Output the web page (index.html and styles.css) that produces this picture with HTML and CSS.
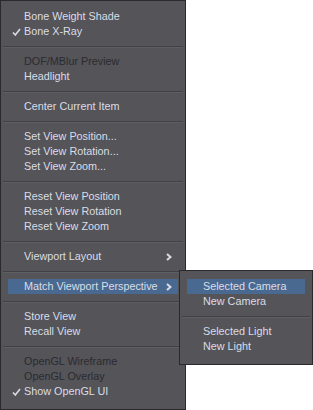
FILE: index.html
```html
<!DOCTYPE html>
<html>
<head>
    <title>Viewport Menu</title>
    <link rel="stylesheet" href="styles.css">
</head>
<body>
    <div class="menu">
        <div class="item"><span class="mark"></span><span class="label">Bone Weight Shade</span></div>
        <div class="item">
            <span class="mark"><svg width="9" height="8" viewBox="0 0 9 8"><path d="M1 4.5 L3.3 7 L8 1" fill="none" stroke="#d9dce4" stroke-width="1.6"/></svg></span>
            <span class="label">Bone X-Ray</span>
        </div>
        <div class="sep"></div>
        <div class="item dim"><span class="mark"></span><span class="label">DOF/MBlur Preview</span></div>
        <div class="item"><span class="mark"></span><span class="label">Headlight</span></div>
        <div class="sep"></div>
        <div class="item"><span class="mark"></span><span class="label">Center Current Item</span></div>
        <div class="sep"></div>
        <div class="item"><span class="mark"></span><span class="label">Set View Position...</span></div>
        <div class="item"><span class="mark"></span><span class="label">Set View Rotation...</span></div>
        <div class="item"><span class="mark"></span><span class="label">Set View Zoom...</span></div>
        <div class="sep"></div>
        <div class="item"><span class="mark"></span><span class="label">Reset View Position</span></div>
        <div class="item"><span class="mark"></span><span class="label">Reset View Rotation</span></div>
        <div class="item"><span class="mark"></span><span class="label">Reset View Zoom</span></div>
        <div class="sep"></div>
        <div class="item">
            <span class="mark"></span><span class="label">Viewport Layout</span>
            <svg class="arrow" width="6" height="8" viewBox="0 0 6 8"><path d="M1 1 L4.5 4 L1 7" fill="none" stroke="#d9dce4" stroke-width="2"/></svg>
        </div>
        <div class="sep"></div>
        <div class="item active">
            <span class="mark"></span><span class="label">Match Viewport Perspective</span>
            <svg class="arrow" width="6" height="8" viewBox="0 0 6 8"><path d="M1 1 L4.5 4 L1 7" fill="none" stroke="#d9dce4" stroke-width="2"/></svg>
        </div>
        <div class="sep"></div>
        <div class="item"><span class="mark"></span><span class="label">Store View</span></div>
        <div class="item"><span class="mark"></span><span class="label">Recall View</span></div>
        <div class="sep"></div>
        <div class="item dim"><span class="mark"></span><span class="label">OpenGL Wireframe</span></div>
        <div class="item dim"><span class="mark"></span><span class="label">OpenGL Overlay</span></div>
        <div class="item">
            <span class="mark"><svg width="9" height="8" viewBox="0 0 9 8"><path d="M1 4.5 L3.3 7 L8 1" fill="none" stroke="#d9dce4" stroke-width="1.6"/></svg></span>
            <span class="label">Show OpenGL UI</span>
        </div>
    </div>

    <!-- submenu for Match Viewport Perspective -->
    <div class="menu submenu">
        <div class="item active"><span class="mark"></span><span class="label">Selected Camera</span></div>
        <div class="item"><span class="mark"></span><span class="label">New Camera</span></div>
        <div class="sep"></div>
        <div class="item"><span class="mark"></span><span class="label">Selected Light</span></div>
        <div class="item"><span class="mark"></span><span class="label">New Light</span></div>
    </div>
</body>
</html>
```

FILE: styles.css
```css
body {
    margin: 0;
    padding: 0;
    background: #ffffff;
    font-family: 'Liberation Sans', Arial, sans-serif;
    font-size: 10.8px;
}

.menu {
    width: 184px;
    height: 400px;
    padding-top: 8px;
    background: #545459;
    border: 1px solid #2a2a2d;
    color: #dadde6;
}

.item {
    display: flex;
    align-items: center;
    height: 15px;
    line-height: 15px;
    margin: 0 7px;
    white-space: nowrap;
}

.mark {
    width: 16px;
    height: 15px;
    flex: none;
    display: flex;
    align-items: center;
    padding-left: 4px;
    box-sizing: border-box;
}

.label {
    flex: 1;
}

.item.dim {
    color: #2b2b30;
}

.item.active {
    background: #4a6990;
}

.arrow {
    flex: none;
    margin-right: 6px;
}

.sep {
    height: 15px;
    margin: 0 2px;
    display: flex;
    align-items: center;
}

.sep::after {
    content: "";
    flex: 1;
    border-top: 1px solid #404045;
    border-bottom: 1px solid #5e5e63;
}

.submenu {
    position: absolute;
    left: 179px;
    top: 270px;
    width: 132px;
    height: 85px;
}
```
